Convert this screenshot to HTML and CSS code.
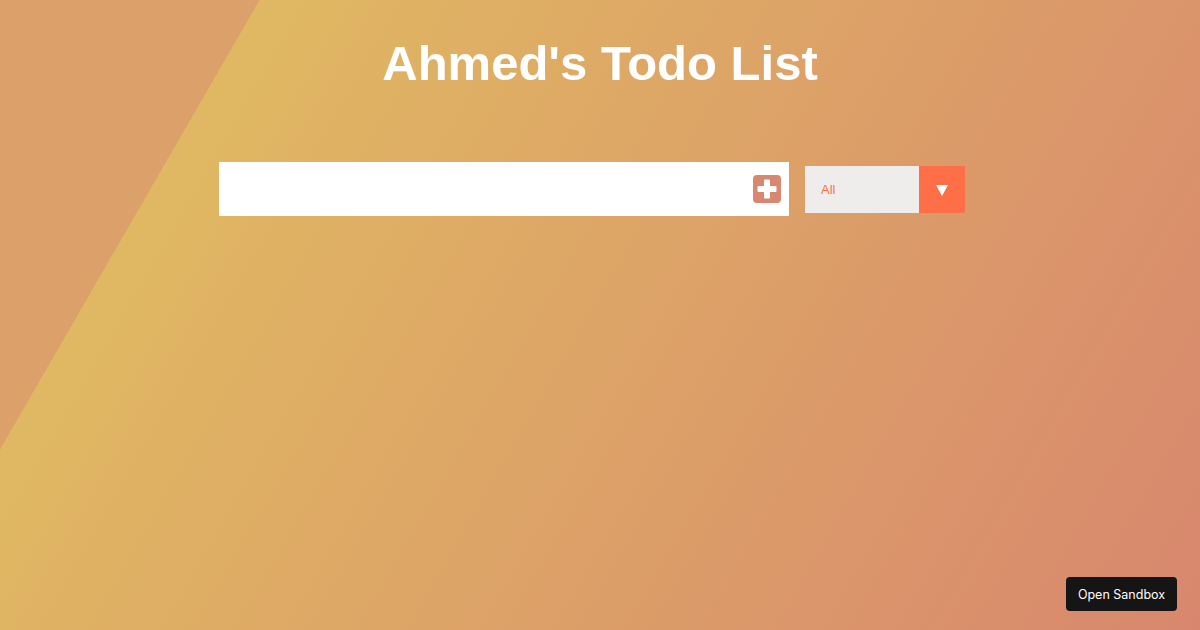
FILE: index.html
```html
<!DOCTYPE html>
<html lang="en">
<head>
<meta charset="utf-8">
<title>Ahmed's Todo List</title>
<link rel="stylesheet" href="styles.css">
</head>
<body>
  <header class="header">
    <h1 class="title">Ahmed's Todo List</h1>
  </header>
  <form class="todo-form">
    <div class="entry">
      <input class="todo-input" type="text" aria-label="New todo">
      <button class="todo-button" type="button" aria-label="Add">
        <svg width="28" height="28" viewBox="0 0 28 28" aria-hidden="true">
          <rect x="0" y="0" width="28" height="28" rx="4" fill="#d88771"/>
          <rect x="11" y="4.5" width="6" height="19" rx="1" fill="#fff"/>
          <rect x="4.5" y="11" width="19" height="6" rx="1" fill="#fff"/>
        </svg>
      </button>
    </div>
    <div class="select">
      <select class="filter" aria-label="Filter">
        <option>All</option>
        <option>Completed</option>
        <option>Uncompleted</option>
      </select>
      <span class="arrow"><span class="tri"></span></span>
    </div>
  </form>
  <a class="sandbox" href="#">Open Sandbox</a>
</body>
</html>
```

FILE: styles.css
```css
* {
  margin: 0;
  padding: 0;
  box-sizing: border-box;
}

html, body {
  height: 100%;
}

body {
  min-height: 100vh;
  background-image: linear-gradient(120deg, #dca16a 0%, #dca16a 16.6%, #e0b862 16.6%, #d8876e 100%);
  color: #fff;
  font-family: "Liberation Sans", Arial, sans-serif;
  overflow: hidden;
}

.header {
  height: 126px;
  display: flex;
  justify-content: center;
  align-items: center;
}

.title {
  font-size: 49px;
  font-weight: 700;
  line-height: 1;
  margin-top: 0;
}

.todo-form {
  height: 126px;
  display: flex;
  justify-content: center;
  align-items: center;
}

.entry {
  display: flex;
  height: 54px;
  background: #fff;
}

.todo-input {
  width: 526px;
  height: 54px;
  border: none;
  outline: none;
  background: #fff;
  font-size: 32px;
  padding: 8px;
  font-family: "Liberation Sans", Arial, sans-serif;
}

.todo-button {
  width: 44px;
  height: 54px;
  border: none;
  background: #fff;
  display: flex;
  align-items: center;
  justify-content: center;
  cursor: pointer;
}

.todo-button svg {
  display: block;
}

.select {
  position: relative;
  margin: 0 16px;
  width: 160px;
  height: 47px;
  overflow: hidden;
}

.filter {
  -webkit-appearance: none;
  appearance: none;
  width: 160px;
  height: 47px;
  border: none;
  outline: none;
  border-radius: 0;
  background: #efedeb;
  color: #ff6f47;
  font-family: "Liberation Sans", Arial, sans-serif;
  font-size: 13px;
  padding: 0 16px;
  cursor: pointer;
}

.arrow {
  position: absolute;
  top: 0;
  right: 0;
  width: 46px;
  height: 47px;
  background: #ff6f47;
  display: flex;
  align-items: center;
  justify-content: center;
  pointer-events: none;
}

.tri {
  width: 0;
  height: 0;
  border-left: 6.5px solid transparent;
  border-right: 6.5px solid transparent;
  border-top: 11px solid #fff;
  margin-top: 2px;
}

.sandbox {
  position: fixed;
  right: 23px;
  bottom: 19px;
  width: 111px;
  height: 34px;
  display: flex;
  align-items: center;
  justify-content: center;
  background: #151515;
  color: #fff;
  border-radius: 4px;
  font-family: Inter, "Liberation Sans", sans-serif;
  font-size: 12.5px;
  text-decoration: none;
}
```
